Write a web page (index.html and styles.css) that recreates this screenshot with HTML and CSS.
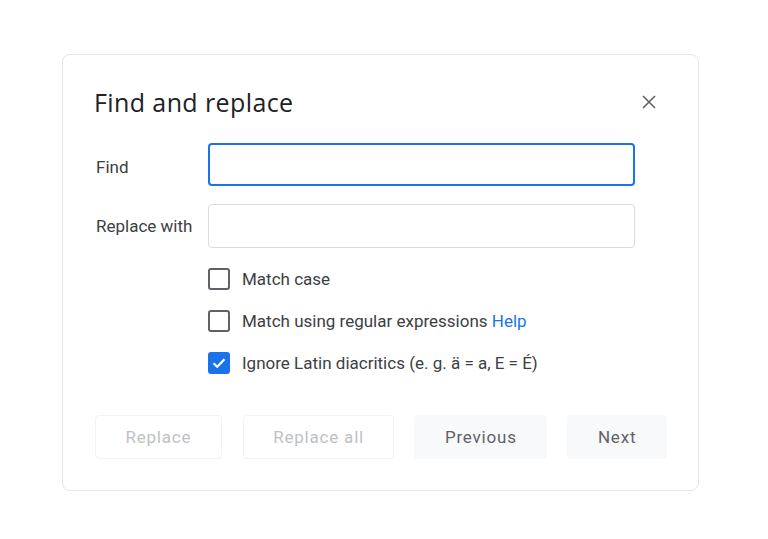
FILE: index.html
```html
<!DOCTYPE html>
<html>
<head>
<meta charset="utf-8">
<link rel="stylesheet" href="styles.css">
</head>
<body>
<div class="page">
  <div class="dialog">
    <div class="header">
      <h1 class="title">Find and replace</h1>
      <button class="close" aria-label="Close">
        <svg width="14" height="14" viewBox="0 0 14 14"><path d="M1 1L13 13M13 1L1 13" stroke="#5f6368" stroke-width="1.6" fill="none"/></svg>
      </button>
    </div>
    <div class="field find-row">
      <label class="label find-label">Find</label>
      <div class="input focused"></div>
    </div>
    <div class="field replace-row">
      <label class="label">Replace with</label>
      <div class="input"></div>
    </div>
    <div class="options">
      <div class="option"><span class="box"></span><span class="opt-text">Match case</span></div>
      <div class="option"><span class="box"></span><span class="opt-text">Match using regular expressions <a class="help">Help</a></span></div>
      <div class="option"><span class="box checked"><svg width="22" height="22" viewBox="0 0 22 22"><path d="M5.5 11.2L9.2 14.8L16.5 7.2" stroke="#fff" stroke-width="2.2" fill="none"/></svg></span><span class="opt-text">Ignore Latin diacritics (e. g. ä = a, E = É)</span></div>
    </div>
    <div class="buttons">
      <button class="btn disabled w-replace">Replace</button>
      <button class="btn disabled w-replace-all">Replace all</button>
      <button class="btn active w-prev">Previous</button>
      <button class="btn active w-next">Next</button>
    </div>
  </div>
</div>
</body>
</html>
```
FILE: styles.css
```css
* { box-sizing: border-box; }
html, body { margin: 0; padding: 0; background: #fff; }
body { font-family: Roboto, "Liberation Sans", sans-serif; color: #3c4043; }
.page { padding: 54px 0 0 62px; }
.dialog {
  width: 637px;
  height: 437px;
  border: 1px solid #e6e6e6;
  border-radius: 8px;
  padding: 31px 31px 31px 31px;
  display: flex;
  flex-direction: column;
  background: #fff;
}
.header { display: flex; align-items: center; justify-content: space-between; height: 32px; }
.title {
  margin: 0;
  font-family: "Open Sans", Roboto, sans-serif;
  font-weight: 400;
  font-size: 25px;
  line-height: 32px;
  color: #202124;
  letter-spacing: 0.4px;
}
.close {
  border: 0; background: none; padding: 0; width: 14px; height: 14px;
  margin-right: 11px; display: flex;
}
.field { display: flex; align-items: center; }
.find-row { margin-top: 25px; }
.replace-row { margin-top: 18px; }
.label { width: 114px; padding-left: 2px; font-size: 17px; color: #3c4043; }
.find-label { padding-top: 5px; }
.input { width: 427px; height: 44px; border: 1px solid #dadce0; border-radius: 4px; }
.input.focused { height: 43px; border: 2px solid #1a73e8; }
.options { margin-top: 19px; margin-left: 114px; display: flex; flex-direction: column; gap: 18px; }
.option { display: flex; align-items: center; height: 24px; }
.box { width: 22px; height: 22px; border: 2px solid #5f6368; border-radius: 3px; display: block; }
.box.checked { border: 0; background: #1a73e8; }
.box svg { display: block; }
.opt-text { margin-left: 12px; font-size: 17px; color: #3c4043; }
.help { color: #1a73e8; }
.buttons { margin-top: 40px; display: flex; gap: 20px; padding-left: 1px; }
.btn {
  height: 44px;
  border-radius: 4px;
  font-family: Roboto, sans-serif;
  font-size: 17px;
  font-weight: 400;
  letter-spacing: 0.8px;
  padding: 0;
}
.btn.disabled { background: #fff; border: 1px solid #f1f3f4; color: #bdc1c6; }
.btn.active { background: #f8f9fa; border: 0; color: #5f6368; }
.w-replace { width: 127px; margin-right: 1px; }
.w-replace-all { width: 152px; }
.w-prev { width: 133px; }
.w-next { width: 100px; }
```
